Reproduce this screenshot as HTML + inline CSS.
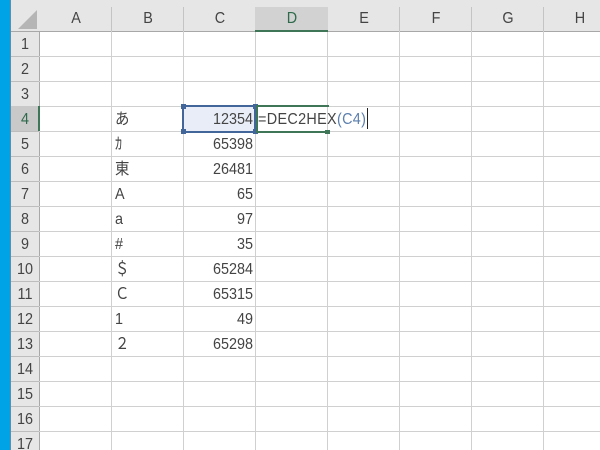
<!DOCTYPE html>
<html><head><meta charset="utf-8">
<style>
html,body{margin:0;padding:0;background:#fff}
#p{position:relative;width:600px;height:450px;overflow:hidden;background:#fff;font-family:"Liberation Sans","Noto Sans CJK JP",sans-serif;color:#444;font-size:16px}
#p div{position:absolute}
.v{background:#d0d0d0;top:31px;width:1px;height:419px}
.l{left:39px;width:561px;height:1px;background:#d0d0d0}
.hl{top:7px;width:1px;height:24px;background:#c4c4c4}
.rl{left:11px;width:28px;height:1px;background:#bdbdbd}
.ch{top:8px;width:72px;height:22px;line-height:22px;text-align:center;color:#444;transform:scaleX(.9)}
.rh{left:11px;width:28px;height:24px;line-height:25px;text-align:center;color:#444;transform:scaleX(.9)}
.b{left:115px;height:24px;line-height:25px;white-space:nowrap;transform:scaleX(.9);transform-origin:left center}
.n{left:184px;width:69px;height:24px;line-height:25px;text-align:right;transform:scaleX(.9);transform-origin:right center}
.hd{width:5px;height:5px;background:#42659a}
</style></head><body>
<div id="p">
<div style="left:0;top:0;width:10px;height:450px;background:#00a4e6"></div>
<div style="left:10px;top:0;width:1px;height:450px;background:#5f8fa8"></div>
<div style="left:11px;top:0;width:589px;height:31px;background:#e6e6e6"></div>
<div style="left:11px;top:31px;width:28px;height:419px;background:#e6e6e6"></div>
<div style="left:39px;top:31px;width:1px;height:419px;background:#a8a8a8"></div>
<div style="left:11px;top:31px;width:589px;height:1px;background:#a8a8a8"></div>
<svg style="position:absolute;left:18px;top:10px" width="20" height="19"><path d="M19 0V19H0Z" fill="#b5b5b5"/></svg>

<div class="v" style="left:111px"></div><div class="v" style="left:183px"></div><div class="v" style="left:255px"></div><div class="v" style="left:327px"></div><div class="v" style="left:399px"></div><div class="v" style="left:471px"></div><div class="v" style="left:543px"></div>
<div class="l" style="top:56px"></div><div class="l" style="top:81px"></div><div class="l" style="top:106px"></div><div class="l" style="top:131px"></div><div class="l" style="top:156px"></div><div class="l" style="top:181px"></div><div class="l" style="top:206px"></div><div class="l" style="top:231px"></div><div class="l" style="top:256px"></div><div class="l" style="top:281px"></div><div class="l" style="top:306px"></div><div class="l" style="top:331px"></div><div class="l" style="top:356px"></div><div class="l" style="top:381px"></div><div class="l" style="top:406px"></div><div class="l" style="top:431px"></div>

<div class="hl" style="left:111px"></div><div class="hl" style="left:183px"></div><div class="hl" style="left:327px"></div><div class="hl" style="left:399px"></div><div class="hl" style="left:471px"></div><div class="hl" style="left:543px"></div>
<div style="left:255px;top:7px;width:73px;height:24px;background:#d2d2d2"></div>
<div style="left:255px;top:30px;width:73px;height:2px;background:#3f7657"></div>

<div class="ch" style="left:40px">A</div><div class="ch" style="left:112px">B</div><div class="ch" style="left:184px">C</div><div class="ch" style="left:256px;color:#2f6a4c">D</div><div class="ch" style="left:328px">E</div><div class="ch" style="left:400px">F</div><div class="ch" style="left:472px">G</div><div class="ch" style="left:544px">H</div>

<div class="rl" style="top:56px"></div><div class="rl" style="top:81px"></div><div class="rl" style="top:156px"></div><div class="rl" style="top:181px"></div><div class="rl" style="top:206px"></div><div class="rl" style="top:231px"></div><div class="rl" style="top:256px"></div><div class="rl" style="top:281px"></div><div class="rl" style="top:306px"></div><div class="rl" style="top:331px"></div><div class="rl" style="top:356px"></div><div class="rl" style="top:381px"></div><div class="rl" style="top:406px"></div><div class="rl" style="top:431px"></div><div class="rl" style="top:131px"></div>
<div style="left:11px;top:106px;width:28px;height:25px;background:#c9c9c9"></div>
<div style="left:38px;top:106px;width:2px;height:25px;background:#3f7657"></div>

<div class="rh" style="top:32px">1</div><div class="rh" style="top:57px">2</div><div class="rh" style="top:82px">3</div><div class="rh" style="top:107px;color:#2f6a4c">4</div><div class="rh" style="top:132px">5</div><div class="rh" style="top:157px">6</div><div class="rh" style="top:182px">7</div><div class="rh" style="top:207px">8</div><div class="rh" style="top:232px">9</div><div class="rh" style="top:257px">10</div><div class="rh" style="top:282px">11</div><div class="rh" style="top:307px">12</div><div class="rh" style="top:332px">13</div><div class="rh" style="top:357px">14</div><div class="rh" style="top:382px">15</div><div class="rh" style="top:407px">16</div><div class="rh" style="top:432px">17</div>

<div class="b" style="top:107px">あ</div>
<div class="b" style="top:132px">ｶ</div>
<div class="b" style="top:157px">東</div>
<div class="b" style="top:182px">A</div>
<div class="b" style="top:207px">a</div>
<div class="b" style="top:232px">#</div>
<div class="b" style="top:257px;left:115px">＄</div>
<div class="b" style="top:282px;left:115px">Ｃ</div>
<div class="b" style="top:307px">1</div>
<div class="b" style="top:332px;left:115px">２</div>

<div style="left:184px;top:107px;width:71px;height:24px;background:#e8edf7"></div>
<div class="n" style="top:107px">12354</div>
<div class="n" style="top:132px">65398</div>
<div class="n" style="top:157px">26481</div>
<div class="n" style="top:182px">65</div>
<div class="n" style="top:207px">97</div>
<div class="n" style="top:232px">35</div>
<div class="n" style="top:257px">65284</div>
<div class="n" style="top:282px">65315</div>
<div class="n" style="top:307px">49</div>
<div class="n" style="top:332px">65298</div>

<div style="left:183px;top:105px;width:72px;height:2px;background:#42659a"></div>
<div style="left:183px;top:131px;width:72px;height:2px;background:#42659a"></div>
<div style="left:182px;top:105px;width:2px;height:27px;background:#42659a"></div>
<div style="left:254px;top:105px;width:2px;height:27px;background:#42659a"></div>
<div class="hd" style="left:181px;top:104px"></div><div class="hd" style="left:253px;top:104px"></div><div class="hd" style="left:181px;top:129px"></div><div class="hd" style="left:253px;top:129px"></div>

<div style="left:256px;top:105px;width:2px;height:27px;background:#3f7657"></div>
<div style="left:256px;top:105px;width:73px;height:2px;background:#3f7657"></div>
<div style="left:256px;top:131px;width:73px;height:2px;background:#3f7657"></div>
<div style="left:325px;top:130px;width:5px;height:4px;background:#3f7657"></div>
<div style="left:258px;top:107px;height:24px;line-height:25px;white-space:nowrap;letter-spacing:.35px;transform:scaleX(.9);transform-origin:left center">=DEC2HEX<span style="color:#5b7fae">(C4)</span></div>
<div style="left:367px;top:108px;width:1px;height:21px;background:#222"></div>
</div>
</body></html>
